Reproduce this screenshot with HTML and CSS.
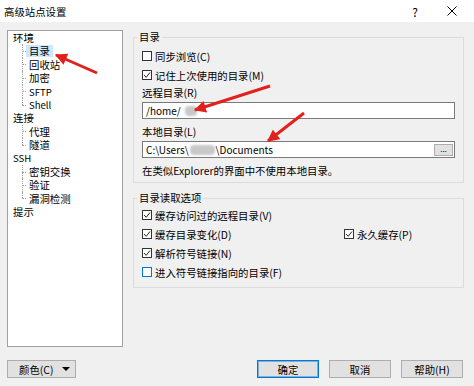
FILE: index.html
```html
<!DOCTYPE html>
<html lang="zh-CN">
<head>
  <meta charset="UTF-8" />
  <title>高级站点设置</title>
  <link rel="stylesheet" href="styles.css">
</head>
<body>
  <div class="dialog">
    <div class="titlebar">
      <span class="title">高级站点设置</span>
      <span class="help">?</span>
      <span class="close">
        <svg width="10" height="10" viewBox="0 0 10 10"><path d="M0.5 0.5 L9.5 9.5 M9.5 0.5 L0.5 9.5" stroke="#000" stroke-width="1"/></svg>
      </span>
    </div>

    <div class="main">
      <div class="tree">
        <div class="row">环境</div>
        <div class="children">
          <div class="row child"><span class="label selected">目录</span></div>
          <div class="row child"><span class="label">回收站</span></div>
          <div class="row child"><span class="label">加密</span></div>
          <div class="row child"><span class="label latin">SFTP</span></div>
          <div class="row child"><span class="label latin">Shell</span></div>
        </div>
        <div class="row">连接</div>
        <div class="children">
          <div class="row child"><span class="label">代理</span></div>
          <div class="row child"><span class="label">隧道</span></div>
        </div>
        <div class="row latin">SSH</div>
        <div class="children">
          <div class="row child"><span class="label">密钥交换</span></div>
          <div class="row child"><span class="label">验证</span></div>
          <div class="row child"><span class="label">漏洞检测</span></div>
        </div>
        <div class="row">提示</div>
      </div>

      <div class="pane">
        <fieldset class="group dirs">
          <legend>目录</legend>
          <label class="check first"><span class="box"></span>同步浏览(C)</label>
          <label class="check"><span class="box"><svg width="8" height="8" viewBox="0 0 8 8"><path d="M1 4 L3.2 6.3 L7 1.5" fill="none" stroke="#222" stroke-width="1"/></svg></span>记住上次使用的目录(M)</label>
          <div class="field-label">远程目录(R)</div>
          <div class="input">/home/<span class="blur short"></span></div>
          <div class="field-label local">本地目录(L)</div>
          <div class="input">C:\Users\<span class="blur long"></span>\Documents<span class="browse">...</span></div>
          <div class="note">在类似Explorer的界面中不使用本地目录。</div>
        </fieldset>

        <fieldset class="group options">
          <legend>目录读取选项</legend>
          <label class="check"><span class="box"><svg width="8" height="8" viewBox="0 0 8 8"><path d="M1 4 L3.2 6.3 L7 1.5" fill="none" stroke="#222" stroke-width="1"/></svg></span>缓存访问过的远程目录(V)</label>
          <div class="pair">
            <label class="check"><span class="box"><svg width="8" height="8" viewBox="0 0 8 8"><path d="M1 4 L3.2 6.3 L7 1.5" fill="none" stroke="#222" stroke-width="1"/></svg></span>缓存目录变化(D)</label>
            <label class="check"><span class="box"><svg width="8" height="8" viewBox="0 0 8 8"><path d="M1 4 L3.2 6.3 L7 1.5" fill="none" stroke="#222" stroke-width="1"/></svg></span>永久缓存(P)</label>
          </div>
          <label class="check"><span class="box"><svg width="8" height="8" viewBox="0 0 8 8"><path d="M1 4 L3.2 6.3 L7 1.5" fill="none" stroke="#222" stroke-width="1"/></svg></span>解析符号链接(N)</label>
          <label class="check"><span class="box focus"></span>进入符号链接指向的目录(F)</label>
        </fieldset>
      </div>
    </div>

    <div class="footer">
      <div class="btn color">颜色(C)<span class="caret"></span></div>
      <div class="actions">
        <div class="btn default">确定</div>
        <div class="btn">取消</div>
        <div class="btn">帮助(H)</div>
      </div>
    </div>

    <svg class="arrows" width="474" height="386" viewBox="0 0 474 386">
      <defs>
        <marker id="head" viewBox="0 0 10 10" refX="9" refY="5" markerWidth="4.2" markerHeight="4" orient="auto">
          <path d="M0 0 L10 5 L0 10 z" fill="#e3211c"/>
        </marker>
      </defs>
      <line x1="97" y1="73" x2="56" y2="55" stroke="#e3211c" stroke-width="3" marker-end="url(#head)"/>
      <line x1="270" y1="86" x2="195" y2="110" stroke="#e3211c" stroke-width="3" marker-end="url(#head)"/>
      <line x1="304" y1="113" x2="268" y2="141" stroke="#e3211c" stroke-width="3" marker-end="url(#head)"/>
    </svg>
  </div>
</body>
</html>
```

FILE: styles.css
```css
* {
  box-sizing: border-box;
}

body {
  margin: 0;
  font-family: "Noto Sans CJK SC", "Noto Sans", sans-serif;
  font-size: 10.4px;
  color: #000;
  background: #f0f0f0;
}

.dialog {
  position: relative;
  width: 474px;
  height: 386px;
  background: #f0f0f0;
  overflow: hidden;
}

.titlebar {
  height: 22px;
  background: #fff;
  display: flex;
  align-items: center;
  padding: 0 12px 0 4px;
}

.title {
  flex: 1;
}

.help {
  width: 20px;
  text-align: center;
  font-size: 12px;
  margin-right: 17px;
}

.close {
  width: 20px;
  display: flex;
  justify-content: center;
}

.main {
  display: flex;
  gap: 10px;
  padding: 8px 10px 0 7px;
}

.tree {
  width: 116px;
  height: 317px;
  background: #fff;
  border: 1px solid #a0a0a0;
  padding: 0 0 0 5px;
}

.row {
  height: 13.4px;
  line-height: 13.4px;
  white-space: nowrap;
}

.latin {
  font-size: 9.6px;
}

.children {
  margin-left: 9px;
}

.child {
  position: relative;
  padding-left: 4px;
}

.child::before {
  content: "";
  position: absolute;
  left: 0;
  top: 50%;
  width: 4px;
  border-top: 1px dotted #a0a0a0;
}

.child::after {
  content: "";
  position: absolute;
  left: 0;
  top: 0;
  bottom: 0;
  border-left: 1px dotted #a0a0a0;
}

.child:last-child::after {
  bottom: 50%;
}

.label {
  display: inline-block;
  padding: 0 3px;
  line-height: 12px;
}

.selected {
  background: #cce8ff;
}

.pane {
  width: 331px;
}

.group {
  margin: 1px 0 0;
  padding: 0 8px 4px;
  border: 1px solid #dcdcdc;
  min-width: 0;
}

.group legend {
  margin-left: -5px;
  padding: 0 2px;
  line-height: 12px;
}

.check {
  display: flex;
  align-items: center;
  gap: 3px;
  height: 19px;
  white-space: nowrap;
}

.check.first {
  margin-top: 3.5px;
}

.box {
  width: 10px;
  height: 10px;
  border: 1px solid #333;
  background: #fff;
  display: flex;
  align-items: center;
  justify-content: center;
}

.box.focus {
  border-color: #0078d7;
}

.field-label {
  line-height: 14px;
  margin-top: 1.5px;
}

.field-label.local {
  margin-top: 6px;
}

.input {
  height: 17px;
  margin-top: 2px;
  border: 1px solid #7a7a7a;
  background: #fff;
  display: flex;
  align-items: center;
  padding-left: 3px;
  font-size: 10px;
}

.blur {
  display: inline-block;
  height: 10px;
  background: #c8c8c8;
  border-radius: 4px;
  filter: blur(1px);
}

.blur.short {
  width: 12px;
  margin-left: 4px;
}

.blur.long {
  width: 25px;
  margin: 0 1px;
}

.browse {
  margin-left: auto;
  margin-right: 1px;
  width: 19px;
  height: 12px;
  background: #e1e1e1;
  border: 1px solid #adadad;
  font-size: 8px;
  line-height: 8px;
  text-align: center;
}

.note {
  line-height: 14px;
  margin-top: 6px;
}

.options {
  margin-top: 9px;
  padding-top: 1.5px;
  padding-bottom: 5px;
}

.pair {
  display: grid;
  grid-template-columns: 202px auto;
}

.footer {
  display: flex;
  justify-content: space-between;
  padding: 13px 11px 0 7px;
}

.actions {
  display: flex;
  gap: 10px;
}

.btn {
  width: 62px;
  height: 18px;
  background: #e1e1e1;
  border: 1px solid #adadad;
  display: flex;
  align-items: center;
  justify-content: center;
}

.btn.default {
  border-color: #0078d7;
  box-shadow: inset 0 0 0 1px rgba(0, 120, 215, 0.45);
}

.btn.color {
  width: 69px;
  justify-content: flex-start;
  padding: 0 5px 0 11px;
}

.caret {
  margin-left: auto;
  width: 0;
  height: 0;
  border-left: 4px solid transparent;
  border-right: 4px solid transparent;
  border-top: 4px solid #000;
}

.arrows {
  position: absolute;
  left: 0;
  top: 0;
  pointer-events: none;
}
```
